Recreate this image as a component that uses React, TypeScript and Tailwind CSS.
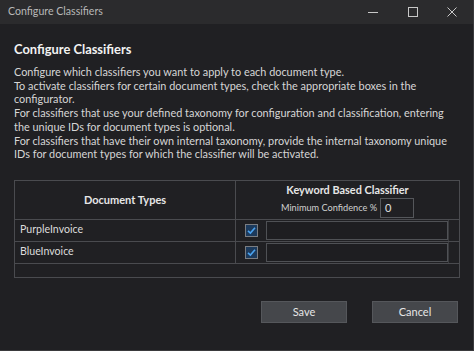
import React from "react";

const font = { fontFamily: 'Lato, "Noto Sans", sans-serif' };

function Check() {
  return (
    <div className="w-[13px] h-[13px] border border-[#7a7d82] bg-[#1c3a5c] flex items-center justify-center">
      <svg width="11" height="11" viewBox="0 0 11 11">
        <path d="M2 5.8 L4.4 8 L9 2.8" fill="none" stroke="#4aa3f0" strokeWidth="1.6" />
      </svg>
    </div>
  );
}

const lines = [
  "Configure which classifiers you want to apply to each document type.",
  "To activate classifiers for certain document types, check the appropriate boxes in the",
  "configurator.",
  "For classifiers that use your defined taxonomy for configuration and classification, entering",
  "the unique IDs for document types is optional.",
  "For classifiers that have their own internal taxonomy, provide the internal taxonomy unique",
  "IDs for document types for which the classifier will be activated.",
];

export default function App() {
  return (
    <div className="w-[474px] h-[351px] bg-[#202023] flex flex-col overflow-hidden border-r border-b border-[#3a3a3d]" style={font}>
      <div className="h-[24px] bg-[#2b2b2d] flex items-center shrink-0">
        <span className="pl-[8px] text-[10.6px] text-[#b8b8b8] flex-1">Configure Classifiers</span>
        <div className="flex items-center text-[#c8c8c8]">
          <svg className="mr-[30px]" width="10" height="10" viewBox="0 0 10 10"><path d="M0 5.5 H10" stroke="currentColor" strokeWidth="1" /></svg>
          <svg className="mr-[29px]" width="10" height="10" viewBox="0 0 10 10"><rect x="0.5" y="0.5" width="9" height="9" fill="none" stroke="currentColor" strokeWidth="1" /></svg>
          <svg className="mr-[16px]" width="10" height="10" viewBox="0 0 10 10"><path d="M0.5 0.5 L9.5 9.5 M9.5 0.5 L0.5 9.5" stroke="currentColor" strokeWidth="1" /></svg>
        </div>
      </div>
      <div className="flex-1 flex flex-col px-[14px]">
        <h1 className="mt-[16px] text-[12.9px] font-bold text-[#f2f2f2] leading-[18px]">Configure Classifiers</h1>
        <div className="mt-[7px] text-[10.9px] leading-[13.7px] text-[#d6d6d6]">
          {lines.map((l) => (
            <div key={l} className="whitespace-nowrap">{l}</div>
          ))}
        </div>
        <div className="mt-[19px] w-[446px] h-[98px] border border-[#4a4b4f] flex flex-col">
          <div className="flex h-[39px] border-b border-[#4a4b4f]">
            <div className="w-[221px] border-r border-[#4a4b4f] flex items-center justify-center text-[11px] font-bold text-[#e6e6e6]">Document Types</div>
            <div className="flex-1 flex flex-col items-center">
              <div className="mt-[1px] text-[10.9px] font-bold text-[#e6e6e6] leading-[16px]">Keyword Based Classifier</div>
              <div className="flex items-center">
                <span className="text-[9.2px] text-[#d0d0d0] mr-[3px]">Minimum Confidence %</span>
                <div className="w-[34px] h-[20px] border border-[#55575b] text-[11px] text-[#e0e0e0] pl-[4px] leading-[18px]">0</div>
              </div>
            </div>
          </div>
          {["PurpleInvoice", "BlueInvoice"].map((n) => (
            <div key={n} className="flex h-[22px] border-b border-[#4a4b4f]">
              <div className="w-[221px] border-r border-[#4a4b4f] flex items-center pl-[5px] text-[10.6px] text-[#dcdcdc]">{n}</div>
              <div className="w-[30px] flex items-center justify-center"><Check /></div>
              <div className="w-[182px] mt-[1px] mb-[1px] border border-[#4f5155] bg-[#1e1e21]"></div>
              <div className="flex-1 border-l border-[#3a3b3e]"></div>
            </div>
          ))}
        </div>
        <div className="mt-[23px] flex justify-end gap-[25px] pr-[1px]">
          <button className="w-[86px] h-[22px] bg-[#45474b] border border-[#55575b] text-[11px] text-[#e6e6e6]">Save</button>
          <button className="w-[86px] h-[22px] bg-[#45474b] border border-[#55575b] text-[11px] text-[#e6e6e6]">Cancel</button>
        </div>
      </div>
    </div>
  );
}
